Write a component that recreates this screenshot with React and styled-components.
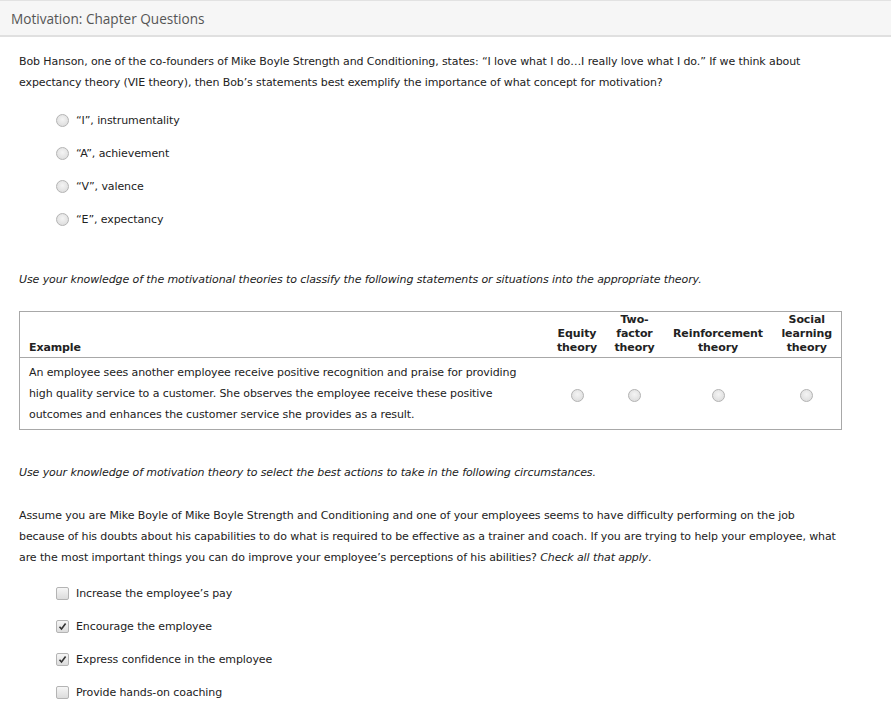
import styled, { createGlobalStyle } from 'styled-components';

const Global = createGlobalStyle`
  html, body { margin: 0; padding: 0; background: #fff; }
  body {
    font-family: "DejaVu Sans", Verdana, sans-serif;
    font-size: 11px;
    letter-spacing: -0.1px;
    color: #222;
  }
`;

const Header = styled.div`
  height: 37px;
  box-sizing: border-box;
  border-top: 1px solid #e2e2e2;
  border-bottom: 2px solid #e0e0e0;
  background: #f6f6f6;
  display: flex;
  align-items: center;
  padding-left: 11px;
  font-family: "Open Sans", sans-serif;
  font-size: 13.6px;
  letter-spacing: 0;
  color: #555;
`;

const Body = styled.div`
  padding: 14px 19px 0 19px;
`;

const Para = styled.p`
  margin: 0;
  max-width: 824px;
  line-height: 21px;
  font-style: ${p => (p.italic ? 'italic' : 'normal')};
`;

const OptionList = styled.div`
  display: flex;
  flex-direction: column;
  gap: 14px;
  padding-left: 37px;
  margin-top: ${p => p.top}px;
`;

const Option = styled.label`
  display: flex;
  align-items: center;
  gap: ${p => p.gap}px;
  height: 19px;
`;

const Radio = styled.span`
  width: 11px;
  height: 11px;
  border-radius: 50%;
  border: 1px solid #b4b4b4;
  background: radial-gradient(circle at 50% 40%, #f4f4f4, #d8d8d8);
  flex-shrink: 0;
  display: inline-block;
  vertical-align: middle;
`;

const Check = styled.span`
  width: 11px;
  height: 11px;
  border-radius: 2px;
  border: 1px solid #b4b4b4;
  background: linear-gradient(#f6f6f6, #dcdcdc);
  flex-shrink: 0;
  display: inline-flex;
  align-items: center;
  justify-content: center;
`;

const Gap = styled.div`
  height: ${p => p.h}px;
`;

const Table = styled.table`
  width: 822px;
  table-layout: fixed;
  border-collapse: collapse;
  border: 1px solid #a8a8a8;
`;

const Th = styled.th`
  font-weight: bold;
  line-height: 14px;
  padding: ${p => (p.first ? '0 8px 2px 9px' : '0 0 2px 0')};
  text-align: ${p => (p.first ? 'left' : 'center')};
  vertical-align: bottom;
  border-bottom: 1px solid #a8a8a8;
  height: 43px;
`;

const Td = styled.td`
  line-height: 21px;
  padding: ${p => (p.first ? '4px 8px 4px 9px' : '2px 0 0 0')};
  text-align: ${p => (p.first ? 'left' : 'center')};
  vertical-align: middle;
`;

const RowText = styled.div`
  width: 500px;
`;

const CheckMark = () => (
  <svg width="9" height="9" viewBox="0 0 9 9">
    <path d="M1.5 4.8 L3.5 7 L7.6 1.6" stroke="#333" strokeWidth="1.6" fill="none" />
  </svg>
);

const radios = ['\u201cI\u201d, instrumentality', '\u201cA\u201d, achievement', '\u201cV\u201d, valence', '\u201cE\u201d, expectancy'];
const checks = [
  ['Increase the employee\u2019s pay', false],
  ['Encourage the employee', true],
  ['Express confidence in the employee', true],
  ['Provide hands-on coaching', false],
];

export default function App() {
  return (
    <>
      <Global />
      <Header>Motivation: Chapter Questions</Header>
      <Body>
        <Para>
          Bob Hanson, one of the co-founders of Mike Boyle Strength and Conditioning, states: &ldquo;I love what I do&hellip;I really love what I do.&rdquo; If we think about expectancy theory (VIE theory), then Bob&rsquo;s statements best exemplify the importance of what concept for motivation?
        </Para>
        <OptionList top={18}>
          {radios.map(r => (
            <Option key={r} gap={7}>
              <Radio />
              {r}
            </Option>
          ))}
        </OptionList>
        <Gap h={40} />
        <Para italic>
          Use your knowledge of the motivational theories to classify the following statements or situations into the appropriate theory.
        </Para>
        <Gap h={21} />
        <Table>
          <colgroup>
            <col style={{ width: 529 }} />
            <col style={{ width: 57 }} />
            <col style={{ width: 58 }} />
            <col style={{ width: 109 }} />
            <col style={{ width: 69 }} />
          </colgroup>
          <thead>
            <tr>
              <Th first>Example</Th>
              <Th>Equity<br />theory</Th>
              <Th>Two-<br />factor<br />theory</Th>
              <Th>Reinforcement<br />theory</Th>
              <Th>Social<br />learning<br />theory</Th>
            </tr>
          </thead>
          <tbody>
            <tr>
              <Td first>
                <RowText>
                  An employee sees another employee receive positive recognition and praise for providing high quality service to a customer. She observes the employee receive these positive outcomes and enhances the customer service she provides as a result.
                </RowText>
              </Td>
              <Td><Radio /></Td>
              <Td><Radio /></Td>
              <Td><Radio /></Td>
              <Td><Radio /></Td>
            </tr>
          </tbody>
        </Table>
        <Gap h={32} />
        <Para italic>Use your knowledge of motivation theory to select the best actions to take in the following circumstances.</Para>
        <Gap h={22} />
        <Para>
          Assume you are Mike Boyle of Mike Boyle Strength and Conditioning and one of your employees seems to have difficulty performing on the job because of his doubts about his capabilities to do what is required to be effective as a trainer and coach. If you are trying to help your employee, what are the most important things you can do improve your employee&rsquo;s perceptions of his abilities? <i>Check all that apply</i>.
        </Para>
        <OptionList top={16}>
          {checks.map(([t, on]) => (
            <Option key={t} gap={7}>
              <Check>{on && <CheckMark />}</Check>
              {t}
            </Option>
          ))}
        </OptionList>
      </Body>
    </>
  );
}
